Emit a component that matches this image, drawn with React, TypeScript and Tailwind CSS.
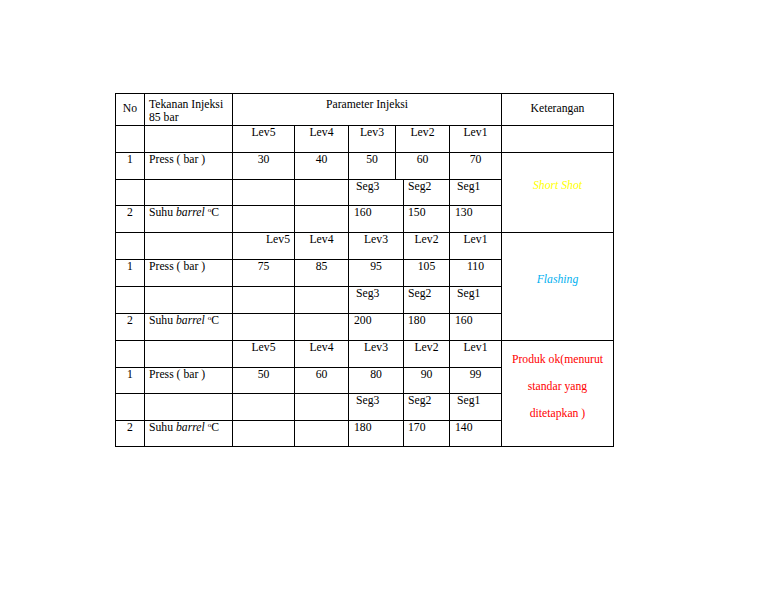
import React from "react";

function C({ className, children }: { className: string; children?: React.ReactNode }) {
  return <div className={`border-r border-b border-black ${className}`}>{children}</div>;
}

function Suhu() {
  return (
    <span>
      Suhu <i>barrel</i> <span className="relative -top-[4px] text-[7px]">o</span>C
    </span>
  );
}

export default function App() {
  return (
    <div className="w-[768px] h-[594px] bg-white pt-[93px] pl-[115px] [font-family:'Liberation_Serif',serif] text-[11.7px] leading-[13px] text-black">
      <div className="grid w-[499px] border-t border-l border-black grid-cols-[29px_88px_62px_54px_47px_8px_46px_52px_112px] grid-rows-[32px_27px_27px_26px_27px_27px_27px_27px_27px_27px_26px_27px_26px]">
        {/* header */}
        <C className="col-start-1 row-start-1 text-center pt-[8px]">No</C>
        <C className="col-start-2 row-start-1 pl-[4px] pt-[4px]">
          Tekanan Injeksi
          <br />
          85 bar
        </C>
        <C className="col-start-3 col-span-6 row-start-1 text-center pt-[4px]">Parameter Injeksi</C>
        <C className="col-start-9 row-start-1 text-center pt-[8px]">Keterangan</C>

        {/* section 1 */}
        <C className="col-start-1 row-start-2" />
        <C className="col-start-2 row-start-2" />
        <C className="col-start-3 row-start-2 text-center">Lev5</C>
        <C className="col-start-4 row-start-2 text-center">Lev4</C>
        <C className="col-start-5 row-start-2 text-center">Lev3</C>
        <C className="col-start-6 col-span-2 row-start-2 text-center">Lev2</C>
        <C className="col-start-8 row-start-2 text-center">Lev1</C>
        <C className="col-start-9 row-start-2" />

        <C className="col-start-1 row-start-3 text-center">1</C>
        <C className="col-start-2 row-start-3 pl-[4px]">Press ( bar )</C>
        <C className="col-start-3 row-start-3 text-center">30</C>
        <C className="col-start-4 row-start-3 text-center">40</C>
        <C className="col-start-5 row-start-3 text-center">50</C>
        <C className="col-start-6 col-span-2 row-start-3 text-center">60</C>
        <C className="col-start-8 row-start-3 text-center">70</C>
        <C className="col-start-9 row-start-3 row-span-3 flex items-center justify-center pb-[14px]">
          <span className="italic text-[#ffff00]">Short Shot</span>
        </C>

        <C className="col-start-1 row-start-4" />
        <C className="col-start-2 row-start-4" />
        <C className="col-start-3 row-start-4" />
        <C className="col-start-4 row-start-4" />
        <C className="col-start-5 col-span-2 row-start-4 pl-[7px]">Seg3</C>
        <C className="col-start-7 row-start-4 pl-[4px]">Seg2</C>
        <C className="col-start-8 row-start-4 pl-[7px]">Seg1</C>

        <C className="col-start-1 row-start-5 text-center">2</C>
        <C className="col-start-2 row-start-5 pl-[4px]">
          <Suhu />
        </C>
        <C className="col-start-3 row-start-5" />
        <C className="col-start-4 row-start-5" />
        <C className="col-start-5 col-span-2 row-start-5 pl-[5px]">160</C>
        <C className="col-start-7 row-start-5 pl-[4px]">150</C>
        <C className="col-start-8 row-start-5 pl-[5px]">130</C>

        {/* section 2 */}
        <C className="col-start-1 row-start-6" />
        <C className="col-start-2 row-start-6" />
        <C className="col-start-3 row-start-6 text-right pr-[4px]">Lev5</C>
        <C className="col-start-4 row-start-6 text-center">Lev4</C>
        <C className="col-start-5 col-span-2 row-start-6 text-center">Lev3</C>
        <C className="col-start-7 row-start-6 text-center">Lev2</C>
        <C className="col-start-8 row-start-6 text-center">Lev1</C>
        <C className="col-start-9 row-start-6 row-span-4 flex items-center justify-center pb-[15px]">
          <span className="italic text-[#00b0f0]">Flashing</span>
        </C>

        <C className="col-start-1 row-start-7 text-center">1</C>
        <C className="col-start-2 row-start-7 pl-[4px]">Press ( bar )</C>
        <C className="col-start-3 row-start-7 text-center">75</C>
        <C className="col-start-4 row-start-7 text-center">85</C>
        <C className="col-start-5 col-span-2 row-start-7 text-center">95</C>
        <C className="col-start-7 row-start-7 text-center">105</C>
        <C className="col-start-8 row-start-7 text-center">110</C>

        <C className="col-start-1 row-start-8" />
        <C className="col-start-2 row-start-8" />
        <C className="col-start-3 row-start-8" />
        <C className="col-start-4 row-start-8" />
        <C className="col-start-5 col-span-2 row-start-8 pl-[7px]">Seg3</C>
        <C className="col-start-7 row-start-8 pl-[4px]">Seg2</C>
        <C className="col-start-8 row-start-8 pl-[7px]">Seg1</C>

        <C className="col-start-1 row-start-9 text-center">2</C>
        <C className="col-start-2 row-start-9 pl-[4px]">
          <Suhu />
        </C>
        <C className="col-start-3 row-start-9" />
        <C className="col-start-4 row-start-9" />
        <C className="col-start-5 col-span-2 row-start-9 pl-[5px]">200</C>
        <C className="col-start-7 row-start-9 pl-[4px]">180</C>
        <C className="col-start-8 row-start-9 pl-[5px]">160</C>

        {/* section 3 */}
        <C className="col-start-1 row-start-10" />
        <C className="col-start-2 row-start-10" />
        <C className="col-start-3 row-start-10 text-center">Lev5</C>
        <C className="col-start-4 row-start-10 text-center">Lev4</C>
        <C className="col-start-5 col-span-2 row-start-10 text-center">Lev3</C>
        <C className="col-start-7 row-start-10 text-center">Lev2</C>
        <C className="col-start-8 row-start-10 text-center">Lev1</C>
        <C className="col-start-9 row-start-10 row-span-4 flex flex-col items-center justify-center pb-[15px] leading-[27px] text-[#ff0000]">
          <span>Produk ok(menurut</span>
          <span>standar yang</span>
          <span>ditetapkan )</span>
        </C>

        <C className="col-start-1 row-start-11 text-center">1</C>
        <C className="col-start-2 row-start-11 pl-[4px]">Press ( bar )</C>
        <C className="col-start-3 row-start-11 text-center">50</C>
        <C className="col-start-4 row-start-11 text-center">60</C>
        <C className="col-start-5 col-span-2 row-start-11 text-center">80</C>
        <C className="col-start-7 row-start-11 text-center">90</C>
        <C className="col-start-8 row-start-11 text-center">99</C>

        <C className="col-start-1 row-start-12" />
        <C className="col-start-2 row-start-12" />
        <C className="col-start-3 row-start-12" />
        <C className="col-start-4 row-start-12" />
        <C className="col-start-5 col-span-2 row-start-12 pl-[7px]">Seg3</C>
        <C className="col-start-7 row-start-12 pl-[4px]">Seg2</C>
        <C className="col-start-8 row-start-12 pl-[7px]">Seg1</C>

        <C className="col-start-1 row-start-13 text-center">2</C>
        <C className="col-start-2 row-start-13 pl-[4px]">
          <Suhu />
        </C>
        <C className="col-start-3 row-start-13" />
        <C className="col-start-4 row-start-13" />
        <C className="col-start-5 col-span-2 row-start-13 pl-[5px]">180</C>
        <C className="col-start-7 row-start-13 pl-[4px]">170</C>
        <C className="col-start-8 row-start-13 pl-[5px]">140</C>
      </div>
    </div>
  );
}
